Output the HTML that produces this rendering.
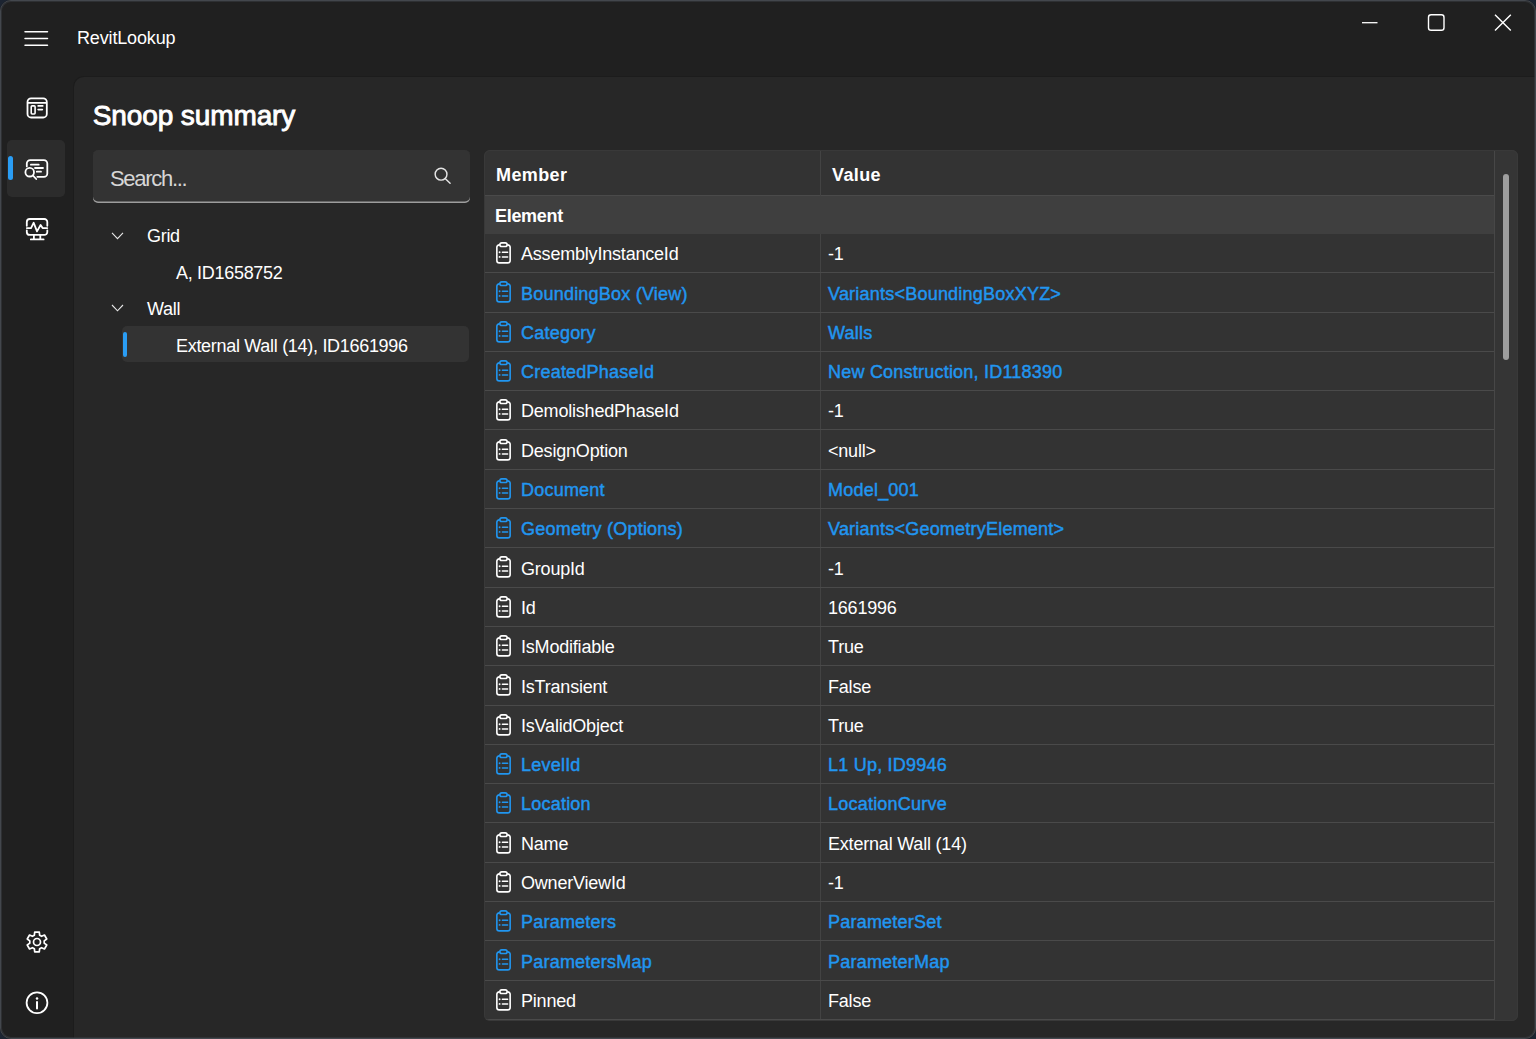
<!DOCTYPE html>
<html><head><meta charset="utf-8">
<style>
*{box-sizing:border-box;margin:0;padding:0}
html,body{width:1536px;height:1039px;overflow:hidden;background:#1c2431;font-family:"Liberation Sans",sans-serif;color:#fff}
#win{position:absolute;left:0;top:0;width:1536px;height:1039px;background:#202020;border-radius:11px;overflow:hidden}
#winb{position:absolute;left:0;top:0;width:1536px;height:1039px;border:1px solid #43474d;border-radius:11px;box-shadow:inset 0 0 0 1px rgba(58,62,68,0.55);pointer-events:none}
.abs{position:absolute}
#title{left:77px;top:28px;font-size:18px;letter-spacing:-0.15px;white-space:nowrap;line-height:21px}
#content{left:74px;top:77px;width:1470px;height:1000px;background:#272727;border-radius:10px;box-shadow:0 0 0 1px #1c1c1c}
#h1{left:92.7px;top:100px;font-size:28px;font-weight:400;-webkit-text-stroke:0.9px #fff;letter-spacing:-0.1px;white-space:nowrap;line-height:32px}
#search{left:93px;top:150px;width:377px;height:53px;background:#333333;border-radius:5px;box-shadow:inset 0 -1.6px 0 #9d9d9d}
#search .bb{position:absolute;left:0;bottom:0;width:100%;height:2px;background:#9b9b9b}
#search span{position:absolute;left:17px;top:16px;font-size:22px;letter-spacing:-1.3px;color:#d6d6d6;line-height:25px}
.tree{font-size:18px;white-space:nowrap;position:absolute;line-height:21px;letter-spacing:-0.3px}
#grid{left:484px;top:150px;width:1034px;height:871px;background:#333333;border-radius:6px;overflow:hidden}
#gridb{left:484px;top:150px;width:1034px;height:871px;border:1px solid #393939;border-radius:6px}
.hdr{position:absolute;top:0;left:0;width:1010px;height:46px;border-bottom:1px solid #4a4a4a}
.hdr span{position:absolute;top:14.6px;font-size:18px;font-weight:bold;line-height:21px;letter-spacing:0.4px}
.grp{position:absolute;top:46px;left:0;width:1010px;height:38px;background:#3f3f3f}
.grp span{position:absolute;left:11px;top:10px;font-size:18px;font-weight:bold;line-height:21px;letter-spacing:-0.3px}
.row{position:absolute;left:0;width:1010px;height:39.3px;border-bottom:1px solid #4a4a4a}
.row .c1{position:absolute;left:37px;top:10.3px;font-size:18px;white-space:nowrap;letter-spacing:-0.2px;line-height:21px}
.row .c2{position:absolute;left:344px;top:10.3px;font-size:18px;white-space:nowrap;letter-spacing:-0.2px;line-height:21px}
.row .ci{position:absolute;left:12px;top:8px;color:#fff}
.row.blue{color:#2196f0}
.row.blue span{letter-spacing:0.22px;-webkit-text-stroke:0.45px #2196f0}
.row.blue .ci{color:#2196f0}
.vsep{position:absolute;width:1px;background:#434343}
#sb{position:absolute;left:1010px;top:0;width:24px;height:871px;background:#353535;border-left:1px solid #474747}
#thumb{position:absolute;left:8px;top:24px;width:6px;height:186px;background:#9e9e9e;border-radius:3px}
</style></head><body>
<div id="win">
  <!-- hamburger -->
  <svg class="abs" style="left:24px;top:30px" width="25" height="17" viewBox="0 0 25 17"><path d="M1 1.8H23.5M1 8.5H23.5M1 15.3H23.5" stroke="#fff" stroke-width="1.5" stroke-linecap="round"/></svg>
  <div id="title" class="abs">RevitLookup</div>
  <!-- window controls -->
  <svg class="abs" style="left:1355px;top:8px" width="170" height="30" viewBox="0 0 170 30">
    <path d="M7 14.7H22.5" stroke="#fff" stroke-width="1.3"/>
    <rect x="73.5" y="6.8" width="15.5" height="15.5" rx="2.6" fill="none" stroke="#fff" stroke-width="1.4"/>
    <path d="M140 6.7L155.8 22.5M155.8 6.7L140 22.5" stroke="#fff" stroke-width="1.4"/>
  </svg>
  <!-- nav -->
  <div class="abs" style="left:7px;top:140px;width:58px;height:57px;background:#2c2c2c;border-radius:5px"></div>
  <div class="abs" style="left:8px;top:156px;width:4.5px;height:24px;background:#2a9df4;border-radius:2.5px"></div>
  <svg class="abs" style="left:26px;top:97px" width="22" height="22" viewBox="0 0 22 22" fill="none" stroke="#fff">
    <rect x="1.5" y="1.35" width="19.3" height="19.15" rx="3.6" stroke-width="1.8"/>
    <path d="M1.5 5.8H20.8" stroke-width="1.8"/>
    <rect x="5.2" y="8.9" width="3.9" height="8.1" rx="0.9" stroke-width="1.6"/>
    <path d="M12.1 8.9H16.8M12.1 12.6H16.4" stroke-width="1.6" stroke-linecap="round"/>
  </svg>
  <svg class="abs" style="left:20px;top:150px" width="36" height="36" viewBox="0 0 36 36" fill="none" stroke="#fff" stroke-width="1.8" stroke-linecap="round">
    <path d="M6.8 16.4V13.5A3.4 3.4 0 0 1 10.2 10.1H23.9A3.4 3.4 0 0 1 27.3 13.5V23.4A3.4 3.4 0 0 1 23.9 26.8H17.3"/>
    <circle cx="9.7" cy="22.2" r="4.3"/>
    <path d="M13 25.6L16.2 29M10.9 14.7H18.7M15 18H23M16.8 21.7H21"/>
  </svg>
  <svg class="abs" style="left:20px;top:211px" width="36" height="36" viewBox="0 0 36 36" fill="none" stroke="#fff" stroke-width="1.8" stroke-linecap="round" stroke-linejoin="round">
    <path d="M6.8 14.8V11A3 3 0 0 1 9.8 8H24.3A3 3 0 0 1 27.3 11V14.8M6.8 19.3V20.9A3 3 0 0 0 9.8 23.9H24.3A3 3 0 0 0 27.3 20.9V19.3"/>
    <path d="M6.8 17.1H11L13.7 11.7L17 20.4L20.6 14L22.6 17.1H27.3"/>
    <path d="M13.9 24V27.8M20.3 24V27.8M10.8 28.4H23.6"/>
  </svg>
  <svg class="abs" style="left:25px;top:930px" width="24" height="24" viewBox="-12 -12 24 24" fill="none" stroke="#fff" stroke-width="1.7" stroke-linejoin="round">
    <path d="M-2.62 -6.82 L-2.29 -9.94 L2.29 -9.94 L2.62 -6.82 L4.59 -5.67 L7.46 -6.96 L9.75 -2.98 L7.21 -1.14 L7.21 1.14 L9.75 2.98 L7.46 6.96 L4.59 5.67 L2.62 6.82 L2.29 9.94 L-2.29 9.94 L-2.62 6.82 L-4.59 5.67 L-7.46 6.96 L-9.75 2.98 L-7.21 1.14 L-7.21 -1.14 L-9.75 -2.98 L-7.46 -6.96 L-4.59 -5.67Z"/>
    <circle cx="0" cy="0" r="3.5"/>
  </svg>
  <svg class="abs" style="left:25px;top:991px" width="24" height="24" viewBox="-12 -12 24 24" fill="none" stroke="#fff">
    <circle cx="0" cy="-0.3" r="10.4" stroke-width="1.8"/>
    <circle cx="0" cy="-4.5" r="1.25" fill="#fff" stroke="none"/>
    <path d="M0 -1V5.6" stroke-width="2" stroke-linecap="round"/>
  </svg>

  <div id="content" class="abs"></div>
  <div id="h1" class="abs">Snoop summary</div>
  <div id="search" class="abs"><span>Search...</span>
    <svg class="abs" style="left:333px;top:10px" width="34" height="34" viewBox="0 0 34 34" fill="none" stroke="#e4e4e4" stroke-width="1.45" stroke-linecap="round"><circle cx="15.05" cy="14.2" r="5.9"/><path d="M19.4 18.7L24.1 23.2"/></svg>
  </div>

  <svg class="abs" style="left:110px;top:230px" width="16" height="12" viewBox="0 0 16 12" fill="none" stroke="#e8e8e8" stroke-width="1.1"><path d="M2 2.8L7.5 8.6L13 2.8"/></svg>
  <div class="tree" style="left:147px;top:226px">Grid</div>
  <div class="tree" style="left:176px;top:263px">A, ID1658752</div>
  <svg class="abs" style="left:110px;top:302px" width="16" height="12" viewBox="0 0 16 12" fill="none" stroke="#e8e8e8" stroke-width="1.1"><path d="M2 3L7.5 8.8L13 3"/></svg>
  <div class="tree" style="left:147px;top:299px">Wall</div>
  <div class="abs" style="left:122px;top:326px;width:347px;height:36px;background:#333333;border-radius:5px"></div>
  <div class="abs" style="left:122.5px;top:332px;width:4.5px;height:24.5px;background:#2a9df4;border-radius:2.5px"></div>
  <div class="tree" style="left:176px;top:336px">External Wall (14), ID1661996</div>

  <div id="grid" class="abs">
    <div class="hdr"><span style="left:12px">Member</span><span style="left:348px">Value</span></div>
    <div class="vsep" style="left:336px;top:0;height:46px"></div>
    <div class="grp"><span>Element</span></div>
    <div class="vsep" style="left:336px;top:84px;height:787px"></div>
<div class="row" style="top:84.00px"><svg class="ci" width="15" height="22" viewBox="0 0 15 22"><path d="M3.9 2.9H3.3A2.45 2.45 0 0 0 0.85 5.35V18.45A2.45 2.45 0 0 0 3.3 20.9H11.7A2.45 2.45 0 0 0 14.15 18.45V5.35A2.45 2.45 0 0 0 11.7 2.9H11.1" fill="none" stroke="currentColor" stroke-width="1.6"/><rect x="3.9" y="0.85" width="7.2" height="3.7" rx="1.85" fill="none" stroke="currentColor" stroke-width="1.6"/><circle cx="3.6" cy="10.3" r="0.95" fill="currentColor"/><circle cx="3.6" cy="14.9" r="0.95" fill="currentColor"/><path d="M6.4 10.3H11.6M6.4 14.9H11.6" stroke="currentColor" stroke-width="1.5" stroke-linecap="round"/></svg><span class="c1">AssemblyInstanceId</span><span class="c2">-1</span></div>
<div class="row blue" style="top:123.30px"><svg class="ci" width="15" height="22" viewBox="0 0 15 22"><path d="M3.9 2.9H3.3A2.45 2.45 0 0 0 0.85 5.35V18.45A2.45 2.45 0 0 0 3.3 20.9H11.7A2.45 2.45 0 0 0 14.15 18.45V5.35A2.45 2.45 0 0 0 11.7 2.9H11.1" fill="none" stroke="currentColor" stroke-width="1.6"/><rect x="3.9" y="0.85" width="7.2" height="3.7" rx="1.85" fill="none" stroke="currentColor" stroke-width="1.6"/><circle cx="3.6" cy="10.3" r="0.95" fill="currentColor"/><circle cx="3.6" cy="14.9" r="0.95" fill="currentColor"/><path d="M6.4 10.3H11.6M6.4 14.9H11.6" stroke="currentColor" stroke-width="1.5" stroke-linecap="round"/></svg><span class="c1">BoundingBox (View)</span><span class="c2">Variants&lt;BoundingBoxXYZ&gt;</span></div>
<div class="row blue" style="top:162.60px"><svg class="ci" width="15" height="22" viewBox="0 0 15 22"><path d="M3.9 2.9H3.3A2.45 2.45 0 0 0 0.85 5.35V18.45A2.45 2.45 0 0 0 3.3 20.9H11.7A2.45 2.45 0 0 0 14.15 18.45V5.35A2.45 2.45 0 0 0 11.7 2.9H11.1" fill="none" stroke="currentColor" stroke-width="1.6"/><rect x="3.9" y="0.85" width="7.2" height="3.7" rx="1.85" fill="none" stroke="currentColor" stroke-width="1.6"/><circle cx="3.6" cy="10.3" r="0.95" fill="currentColor"/><circle cx="3.6" cy="14.9" r="0.95" fill="currentColor"/><path d="M6.4 10.3H11.6M6.4 14.9H11.6" stroke="currentColor" stroke-width="1.5" stroke-linecap="round"/></svg><span class="c1">Category</span><span class="c2">Walls</span></div>
<div class="row blue" style="top:201.90px"><svg class="ci" width="15" height="22" viewBox="0 0 15 22"><path d="M3.9 2.9H3.3A2.45 2.45 0 0 0 0.85 5.35V18.45A2.45 2.45 0 0 0 3.3 20.9H11.7A2.45 2.45 0 0 0 14.15 18.45V5.35A2.45 2.45 0 0 0 11.7 2.9H11.1" fill="none" stroke="currentColor" stroke-width="1.6"/><rect x="3.9" y="0.85" width="7.2" height="3.7" rx="1.85" fill="none" stroke="currentColor" stroke-width="1.6"/><circle cx="3.6" cy="10.3" r="0.95" fill="currentColor"/><circle cx="3.6" cy="14.9" r="0.95" fill="currentColor"/><path d="M6.4 10.3H11.6M6.4 14.9H11.6" stroke="currentColor" stroke-width="1.5" stroke-linecap="round"/></svg><span class="c1">CreatedPhaseId</span><span class="c2">New Construction, ID118390</span></div>
<div class="row" style="top:241.20px"><svg class="ci" width="15" height="22" viewBox="0 0 15 22"><path d="M3.9 2.9H3.3A2.45 2.45 0 0 0 0.85 5.35V18.45A2.45 2.45 0 0 0 3.3 20.9H11.7A2.45 2.45 0 0 0 14.15 18.45V5.35A2.45 2.45 0 0 0 11.7 2.9H11.1" fill="none" stroke="currentColor" stroke-width="1.6"/><rect x="3.9" y="0.85" width="7.2" height="3.7" rx="1.85" fill="none" stroke="currentColor" stroke-width="1.6"/><circle cx="3.6" cy="10.3" r="0.95" fill="currentColor"/><circle cx="3.6" cy="14.9" r="0.95" fill="currentColor"/><path d="M6.4 10.3H11.6M6.4 14.9H11.6" stroke="currentColor" stroke-width="1.5" stroke-linecap="round"/></svg><span class="c1">DemolishedPhaseId</span><span class="c2">-1</span></div>
<div class="row" style="top:280.50px"><svg class="ci" width="15" height="22" viewBox="0 0 15 22"><path d="M3.9 2.9H3.3A2.45 2.45 0 0 0 0.85 5.35V18.45A2.45 2.45 0 0 0 3.3 20.9H11.7A2.45 2.45 0 0 0 14.15 18.45V5.35A2.45 2.45 0 0 0 11.7 2.9H11.1" fill="none" stroke="currentColor" stroke-width="1.6"/><rect x="3.9" y="0.85" width="7.2" height="3.7" rx="1.85" fill="none" stroke="currentColor" stroke-width="1.6"/><circle cx="3.6" cy="10.3" r="0.95" fill="currentColor"/><circle cx="3.6" cy="14.9" r="0.95" fill="currentColor"/><path d="M6.4 10.3H11.6M6.4 14.9H11.6" stroke="currentColor" stroke-width="1.5" stroke-linecap="round"/></svg><span class="c1">DesignOption</span><span class="c2">&lt;null&gt;</span></div>
<div class="row blue" style="top:319.80px"><svg class="ci" width="15" height="22" viewBox="0 0 15 22"><path d="M3.9 2.9H3.3A2.45 2.45 0 0 0 0.85 5.35V18.45A2.45 2.45 0 0 0 3.3 20.9H11.7A2.45 2.45 0 0 0 14.15 18.45V5.35A2.45 2.45 0 0 0 11.7 2.9H11.1" fill="none" stroke="currentColor" stroke-width="1.6"/><rect x="3.9" y="0.85" width="7.2" height="3.7" rx="1.85" fill="none" stroke="currentColor" stroke-width="1.6"/><circle cx="3.6" cy="10.3" r="0.95" fill="currentColor"/><circle cx="3.6" cy="14.9" r="0.95" fill="currentColor"/><path d="M6.4 10.3H11.6M6.4 14.9H11.6" stroke="currentColor" stroke-width="1.5" stroke-linecap="round"/></svg><span class="c1">Document</span><span class="c2">Model_001</span></div>
<div class="row blue" style="top:359.10px"><svg class="ci" width="15" height="22" viewBox="0 0 15 22"><path d="M3.9 2.9H3.3A2.45 2.45 0 0 0 0.85 5.35V18.45A2.45 2.45 0 0 0 3.3 20.9H11.7A2.45 2.45 0 0 0 14.15 18.45V5.35A2.45 2.45 0 0 0 11.7 2.9H11.1" fill="none" stroke="currentColor" stroke-width="1.6"/><rect x="3.9" y="0.85" width="7.2" height="3.7" rx="1.85" fill="none" stroke="currentColor" stroke-width="1.6"/><circle cx="3.6" cy="10.3" r="0.95" fill="currentColor"/><circle cx="3.6" cy="14.9" r="0.95" fill="currentColor"/><path d="M6.4 10.3H11.6M6.4 14.9H11.6" stroke="currentColor" stroke-width="1.5" stroke-linecap="round"/></svg><span class="c1">Geometry (Options)</span><span class="c2">Variants&lt;GeometryElement&gt;</span></div>
<div class="row" style="top:398.40px"><svg class="ci" width="15" height="22" viewBox="0 0 15 22"><path d="M3.9 2.9H3.3A2.45 2.45 0 0 0 0.85 5.35V18.45A2.45 2.45 0 0 0 3.3 20.9H11.7A2.45 2.45 0 0 0 14.15 18.45V5.35A2.45 2.45 0 0 0 11.7 2.9H11.1" fill="none" stroke="currentColor" stroke-width="1.6"/><rect x="3.9" y="0.85" width="7.2" height="3.7" rx="1.85" fill="none" stroke="currentColor" stroke-width="1.6"/><circle cx="3.6" cy="10.3" r="0.95" fill="currentColor"/><circle cx="3.6" cy="14.9" r="0.95" fill="currentColor"/><path d="M6.4 10.3H11.6M6.4 14.9H11.6" stroke="currentColor" stroke-width="1.5" stroke-linecap="round"/></svg><span class="c1">GroupId</span><span class="c2">-1</span></div>
<div class="row" style="top:437.70px"><svg class="ci" width="15" height="22" viewBox="0 0 15 22"><path d="M3.9 2.9H3.3A2.45 2.45 0 0 0 0.85 5.35V18.45A2.45 2.45 0 0 0 3.3 20.9H11.7A2.45 2.45 0 0 0 14.15 18.45V5.35A2.45 2.45 0 0 0 11.7 2.9H11.1" fill="none" stroke="currentColor" stroke-width="1.6"/><rect x="3.9" y="0.85" width="7.2" height="3.7" rx="1.85" fill="none" stroke="currentColor" stroke-width="1.6"/><circle cx="3.6" cy="10.3" r="0.95" fill="currentColor"/><circle cx="3.6" cy="14.9" r="0.95" fill="currentColor"/><path d="M6.4 10.3H11.6M6.4 14.9H11.6" stroke="currentColor" stroke-width="1.5" stroke-linecap="round"/></svg><span class="c1">Id</span><span class="c2">1661996</span></div>
<div class="row" style="top:477.00px"><svg class="ci" width="15" height="22" viewBox="0 0 15 22"><path d="M3.9 2.9H3.3A2.45 2.45 0 0 0 0.85 5.35V18.45A2.45 2.45 0 0 0 3.3 20.9H11.7A2.45 2.45 0 0 0 14.15 18.45V5.35A2.45 2.45 0 0 0 11.7 2.9H11.1" fill="none" stroke="currentColor" stroke-width="1.6"/><rect x="3.9" y="0.85" width="7.2" height="3.7" rx="1.85" fill="none" stroke="currentColor" stroke-width="1.6"/><circle cx="3.6" cy="10.3" r="0.95" fill="currentColor"/><circle cx="3.6" cy="14.9" r="0.95" fill="currentColor"/><path d="M6.4 10.3H11.6M6.4 14.9H11.6" stroke="currentColor" stroke-width="1.5" stroke-linecap="round"/></svg><span class="c1">IsModifiable</span><span class="c2">True</span></div>
<div class="row" style="top:516.30px"><svg class="ci" width="15" height="22" viewBox="0 0 15 22"><path d="M3.9 2.9H3.3A2.45 2.45 0 0 0 0.85 5.35V18.45A2.45 2.45 0 0 0 3.3 20.9H11.7A2.45 2.45 0 0 0 14.15 18.45V5.35A2.45 2.45 0 0 0 11.7 2.9H11.1" fill="none" stroke="currentColor" stroke-width="1.6"/><rect x="3.9" y="0.85" width="7.2" height="3.7" rx="1.85" fill="none" stroke="currentColor" stroke-width="1.6"/><circle cx="3.6" cy="10.3" r="0.95" fill="currentColor"/><circle cx="3.6" cy="14.9" r="0.95" fill="currentColor"/><path d="M6.4 10.3H11.6M6.4 14.9H11.6" stroke="currentColor" stroke-width="1.5" stroke-linecap="round"/></svg><span class="c1">IsTransient</span><span class="c2">False</span></div>
<div class="row" style="top:555.60px"><svg class="ci" width="15" height="22" viewBox="0 0 15 22"><path d="M3.9 2.9H3.3A2.45 2.45 0 0 0 0.85 5.35V18.45A2.45 2.45 0 0 0 3.3 20.9H11.7A2.45 2.45 0 0 0 14.15 18.45V5.35A2.45 2.45 0 0 0 11.7 2.9H11.1" fill="none" stroke="currentColor" stroke-width="1.6"/><rect x="3.9" y="0.85" width="7.2" height="3.7" rx="1.85" fill="none" stroke="currentColor" stroke-width="1.6"/><circle cx="3.6" cy="10.3" r="0.95" fill="currentColor"/><circle cx="3.6" cy="14.9" r="0.95" fill="currentColor"/><path d="M6.4 10.3H11.6M6.4 14.9H11.6" stroke="currentColor" stroke-width="1.5" stroke-linecap="round"/></svg><span class="c1">IsValidObject</span><span class="c2">True</span></div>
<div class="row blue" style="top:594.90px"><svg class="ci" width="15" height="22" viewBox="0 0 15 22"><path d="M3.9 2.9H3.3A2.45 2.45 0 0 0 0.85 5.35V18.45A2.45 2.45 0 0 0 3.3 20.9H11.7A2.45 2.45 0 0 0 14.15 18.45V5.35A2.45 2.45 0 0 0 11.7 2.9H11.1" fill="none" stroke="currentColor" stroke-width="1.6"/><rect x="3.9" y="0.85" width="7.2" height="3.7" rx="1.85" fill="none" stroke="currentColor" stroke-width="1.6"/><circle cx="3.6" cy="10.3" r="0.95" fill="currentColor"/><circle cx="3.6" cy="14.9" r="0.95" fill="currentColor"/><path d="M6.4 10.3H11.6M6.4 14.9H11.6" stroke="currentColor" stroke-width="1.5" stroke-linecap="round"/></svg><span class="c1">LevelId</span><span class="c2">L1 Up, ID9946</span></div>
<div class="row blue" style="top:634.20px"><svg class="ci" width="15" height="22" viewBox="0 0 15 22"><path d="M3.9 2.9H3.3A2.45 2.45 0 0 0 0.85 5.35V18.45A2.45 2.45 0 0 0 3.3 20.9H11.7A2.45 2.45 0 0 0 14.15 18.45V5.35A2.45 2.45 0 0 0 11.7 2.9H11.1" fill="none" stroke="currentColor" stroke-width="1.6"/><rect x="3.9" y="0.85" width="7.2" height="3.7" rx="1.85" fill="none" stroke="currentColor" stroke-width="1.6"/><circle cx="3.6" cy="10.3" r="0.95" fill="currentColor"/><circle cx="3.6" cy="14.9" r="0.95" fill="currentColor"/><path d="M6.4 10.3H11.6M6.4 14.9H11.6" stroke="currentColor" stroke-width="1.5" stroke-linecap="round"/></svg><span class="c1">Location</span><span class="c2">LocationCurve</span></div>
<div class="row" style="top:673.50px"><svg class="ci" width="15" height="22" viewBox="0 0 15 22"><path d="M3.9 2.9H3.3A2.45 2.45 0 0 0 0.85 5.35V18.45A2.45 2.45 0 0 0 3.3 20.9H11.7A2.45 2.45 0 0 0 14.15 18.45V5.35A2.45 2.45 0 0 0 11.7 2.9H11.1" fill="none" stroke="currentColor" stroke-width="1.6"/><rect x="3.9" y="0.85" width="7.2" height="3.7" rx="1.85" fill="none" stroke="currentColor" stroke-width="1.6"/><circle cx="3.6" cy="10.3" r="0.95" fill="currentColor"/><circle cx="3.6" cy="14.9" r="0.95" fill="currentColor"/><path d="M6.4 10.3H11.6M6.4 14.9H11.6" stroke="currentColor" stroke-width="1.5" stroke-linecap="round"/></svg><span class="c1">Name</span><span class="c2">External Wall (14)</span></div>
<div class="row" style="top:712.80px"><svg class="ci" width="15" height="22" viewBox="0 0 15 22"><path d="M3.9 2.9H3.3A2.45 2.45 0 0 0 0.85 5.35V18.45A2.45 2.45 0 0 0 3.3 20.9H11.7A2.45 2.45 0 0 0 14.15 18.45V5.35A2.45 2.45 0 0 0 11.7 2.9H11.1" fill="none" stroke="currentColor" stroke-width="1.6"/><rect x="3.9" y="0.85" width="7.2" height="3.7" rx="1.85" fill="none" stroke="currentColor" stroke-width="1.6"/><circle cx="3.6" cy="10.3" r="0.95" fill="currentColor"/><circle cx="3.6" cy="14.9" r="0.95" fill="currentColor"/><path d="M6.4 10.3H11.6M6.4 14.9H11.6" stroke="currentColor" stroke-width="1.5" stroke-linecap="round"/></svg><span class="c1">OwnerViewId</span><span class="c2">-1</span></div>
<div class="row blue" style="top:752.10px"><svg class="ci" width="15" height="22" viewBox="0 0 15 22"><path d="M3.9 2.9H3.3A2.45 2.45 0 0 0 0.85 5.35V18.45A2.45 2.45 0 0 0 3.3 20.9H11.7A2.45 2.45 0 0 0 14.15 18.45V5.35A2.45 2.45 0 0 0 11.7 2.9H11.1" fill="none" stroke="currentColor" stroke-width="1.6"/><rect x="3.9" y="0.85" width="7.2" height="3.7" rx="1.85" fill="none" stroke="currentColor" stroke-width="1.6"/><circle cx="3.6" cy="10.3" r="0.95" fill="currentColor"/><circle cx="3.6" cy="14.9" r="0.95" fill="currentColor"/><path d="M6.4 10.3H11.6M6.4 14.9H11.6" stroke="currentColor" stroke-width="1.5" stroke-linecap="round"/></svg><span class="c1">Parameters</span><span class="c2">ParameterSet</span></div>
<div class="row blue" style="top:791.40px"><svg class="ci" width="15" height="22" viewBox="0 0 15 22"><path d="M3.9 2.9H3.3A2.45 2.45 0 0 0 0.85 5.35V18.45A2.45 2.45 0 0 0 3.3 20.9H11.7A2.45 2.45 0 0 0 14.15 18.45V5.35A2.45 2.45 0 0 0 11.7 2.9H11.1" fill="none" stroke="currentColor" stroke-width="1.6"/><rect x="3.9" y="0.85" width="7.2" height="3.7" rx="1.85" fill="none" stroke="currentColor" stroke-width="1.6"/><circle cx="3.6" cy="10.3" r="0.95" fill="currentColor"/><circle cx="3.6" cy="14.9" r="0.95" fill="currentColor"/><path d="M6.4 10.3H11.6M6.4 14.9H11.6" stroke="currentColor" stroke-width="1.5" stroke-linecap="round"/></svg><span class="c1">ParametersMap</span><span class="c2">ParameterMap</span></div>
<div class="row" style="top:830.70px"><svg class="ci" width="15" height="22" viewBox="0 0 15 22"><path d="M3.9 2.9H3.3A2.45 2.45 0 0 0 0.85 5.35V18.45A2.45 2.45 0 0 0 3.3 20.9H11.7A2.45 2.45 0 0 0 14.15 18.45V5.35A2.45 2.45 0 0 0 11.7 2.9H11.1" fill="none" stroke="currentColor" stroke-width="1.6"/><rect x="3.9" y="0.85" width="7.2" height="3.7" rx="1.85" fill="none" stroke="currentColor" stroke-width="1.6"/><circle cx="3.6" cy="10.3" r="0.95" fill="currentColor"/><circle cx="3.6" cy="14.9" r="0.95" fill="currentColor"/><path d="M6.4 10.3H11.6M6.4 14.9H11.6" stroke="currentColor" stroke-width="1.5" stroke-linecap="round"/></svg><span class="c1">Pinned</span><span class="c2">False</span></div>
    <div id="sb"><div id="thumb"></div></div>
  </div>
  <div id="gridb" class="abs"></div>
</div>
<div id="winb"></div>
</body></html>
